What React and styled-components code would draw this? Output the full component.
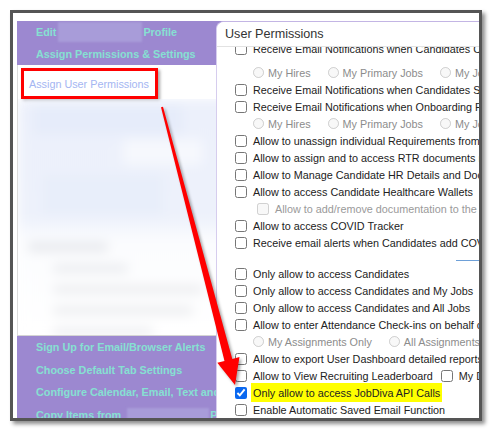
import React from 'react';
import styled, { createGlobalStyle } from 'styled-components';

const GlobalStyle = createGlobalStyle`
  html, body {
    margin: 0;
    padding: 0;
    background: #ffffff;
  }
  body {
    font-family: "Liberation Sans", Arial, sans-serif;
  }
`;

const Screen = styled.div`
  position: relative;
  width: 494px;
  height: 433px;
  padding: 10px 0 0 10px;
  box-sizing: border-box;
  overflow: hidden;
  background: #fff;
`;

const Frame = styled.div`
  position: relative;
  width: 472px;
  height: 411px;
  box-sizing: border-box;
  border: 3px solid #555555;
  box-shadow: 3px 3px 4px rgba(0, 0, 0, 0.45);
  background: #fff;
  overflow: hidden;
  padding: 8px 0 0 4px;
  display: flex;
`;

const Sidebar = styled.div`
  flex: 1;
  display: flex;
  flex-direction: column;
  min-width: 0;
`;

const PurpleBar = styled.div`
  flex: none;
  background: #9c88d0;
  display: flex;
  flex-direction: column;
  padding-left: 19px;
  ${(p) => p.$bottom && 'border-top: 1px solid #d4d4d4; height: 82px; overflow: hidden;'}
`;

const NavRow = styled.div`
  flex: none;
  display: flex;
  align-items: center;
  height: ${(p) => p.$h || 22}px;
  font-size: 10.8px;
  font-weight: bold;
  color: #86e0d2;
  white-space: nowrap;
`;

const NameBlur = styled.span`
  display: inline-block;
  width: ${(p) => p.$w}px;
  height: ${(p) => p.$ht || 20}px;
  margin: 0 1px 0 ${(p) => p.$gap || 2}px;
  background: #a89cd9;
  filter: blur(1px);
`;

const LinkArea = styled.div`
  flex: none;
  background: #fff;
  border-left: 1px solid #dcdcdc;
  padding: 3px 0 0 3px;
`;

const RedBox = styled.div`
  width: 137px;
  height: 31px;
  box-sizing: border-box;
  border: 3px solid #ff0000;
  box-shadow: 2px 2px 3px rgba(0, 0, 0, 0.35);
  display: flex;
  align-items: center;
  padding-left: 5px;
`;

const SideLink = styled.span`
  font-size: 10.8px;
  color: #a4b6f2;
  white-space: nowrap;
`;

const BlurArea = styled.div`
  flex: 1;
  border-left: 1px solid #dcdcdc;
  overflow: hidden;
`;

const BlurInner = styled.div`
  height: 100%;
  display: flex;
  flex-direction: column;
  padding: 6px 0 0 5px;
  box-sizing: border-box;
  background: linear-gradient(to bottom, #ecf0fb 0%, #edf1fb 50%, #fbfcfe 60%, #ffffff 100%);
  filter: blur(6px);
`;

const Smudge = styled.div`
  flex: none;
  width: ${(p) => p.$w}px;
  height: ${(p) => p.$h}px;
  margin-left: ${(p) => p.$x || 0}px;
  margin-top: ${(p) => p.$y || 0}px;
  background: ${(p) => p.$c};
  border-radius: 3px;
`;

const Dialog = styled.div`
  position: absolute;
  left: 203px;
  top: 8px;
  width: 420px;
  bottom: -40px;
  background: #fff;
  border-top: 1px solid #c3b5e4;
  border-left: 1px solid #d6cdee;
  border-top-left-radius: 8px;
  display: flex;
  flex-direction: column;
  overflow: hidden;
`;

const DialogHeader = styled.div`
  position: relative;
  z-index: 1;
  height: 24px;
  flex: none;
  display: flex;
  align-items: center;
  padding-left: 8px;
  background: #fff;
  border-bottom: 1px solid #e2e2e2;
  font-size: 12.6px;
  color: #333;
`;

const DialogBody = styled.div`
  display: flex;
  flex-direction: column;
  padding-left: 18px;
  font-size: 10.8px;
  color: #222;
`;

const Row = styled.div`
  flex: none;
  height: 17px;
  display: flex;
  align-items: center;
  white-space: nowrap;
  padding-left: ${(p) => p.$indent || 0}px;
  color: ${(p) => (p.$muted ? '#9a9a9a' : '#222')};
  ${(p) => p.$clip && 'overflow: hidden; & > * { position: relative; top: -7px; }'}
`;

const Check = styled.input.attrs({ type: 'checkbox' })`
  width: 12px;
  height: 12px;
  margin: 0 6px 0 0;
  flex: none;
  accent-color: #0a68f0;
`;

const Radio = styled.input.attrs({ type: 'radio' })`
  width: 11px;
  height: 11px;
  margin: 0 4px 0 0;
  flex: none;
`;

const RadioOption = styled.span`
  display: inline-flex;
  align-items: center;
  margin-right: 17px;
  color: #8c8c8c;
`;

const Label = styled.span`
  display: inline-flex;
  align-items: center;
  height: 19px;
  padding: 0 2px;
  margin-left: -2px;
  background: ${(p) => (p.$hl ? '#ffff00' : 'transparent')};
`;

const Extra = styled.span`
  display: inline-flex;
  align-items: center;
  margin-left: 6px;
`;

const Line = styled.span`
  display: inline-flex;
  align-items: center;
`;

const Separator = styled.div`
  flex: none;
  height: 14px;
  display: flex;
  align-items: flex-start;
  padding-left: 221px;
  &::after {
    content: '';
    display: block;
    width: 60px;
    height: 1px;
    margin-top: 9px;
    background: #6ea0d8;
  }
`;

const ArrowLayer = styled.svg`
  position: absolute;
  left: 0;
  top: 0;
  width: 494px;
  height: 433px;
  pointer-events: none;
  filter: drop-shadow(2px 2px 1.5px rgba(0, 0, 0, 0.35));
`;

const radiosA = ['My Hires', 'My Primary Jobs', 'My Jobs'];

const rows = [
  { text: 'Receive Email Notifications when Candidates Complete Onboarding', clip: true },
  { radios: radiosA },
  { text: 'Receive Email Notifications when Candidates Submit Timesheets' },
  { text: 'Receive Email Notifications when Onboarding Packages are Completed' },
  { radios: radiosA },
  { text: 'Allow to unassign individual Requirements from Onboarding' },
  { text: 'Allow to assign and to access RTR documents related to Candidates' },
  { text: 'Allow to Manage Candidate HR Details and Documents' },
  { text: 'Allow to access Candidate Healthcare Wallets' },
  { text: 'Allow to add/remove documentation to the Candidate Healthcare Wallets', sub: true },
  { text: 'Allow to access COVID Tracker' },
  { text: 'Receive email alerts when Candidates add COVID documents' },
  { sep: true },
  { text: 'Only allow to access Candidates' },
  { text: 'Only allow to access Candidates and My Jobs' },
  { text: 'Only allow to access Candidates and All Jobs' },
  { text: 'Allow to enter Attendance Check-ins on behalf of Candidates' },
  { radios: ['My Assignments Only', 'All Assignments'] },
  { text: 'Allow to export User Dashboard detailed reports' },
  { text: 'Allow to View Recruiting Leaderboard', extra: 'My Dashboard' },
  { text: 'Only allow to access JobDiva API Calls', checked: true, hl: true },
  { text: 'Enable Automatic Saved Email Function' },
];

const footerLinks = [
  'Sign Up for Email/Browser Alerts',
  'Choose Default Tab Settings',
  'Configure Calendar, Email, Text and Mobile Settings',
];

const PermissionRow = ({ row }) => {
  if (row.sep) return <Separator />;
  if (row.radios) {
    return (
      <Row $indent={18}>
        <Line>
          {row.radios.map((r) => (
            <RadioOption key={r}>
              <Radio disabled />
              {r}
            </RadioOption>
          ))}
        </Line>
      </Row>
    );
  }
  return (
    <Row $clip={row.clip} $indent={row.sub ? 22 : 0} $muted={row.sub}>
      <Line>
        <Check disabled={row.sub} defaultChecked={row.checked} />
        <Label $hl={row.hl}>{row.text}</Label>
        {row.extra && (
          <Extra>
            <Check />
            {row.extra}
          </Extra>
        )}
      </Line>
    </Row>
  );
};

const App = () => (
  <>
    <GlobalStyle />
    <Screen>
      <Frame>
        <Sidebar>
          <PurpleBar>
            <NavRow>
              Edit
              <NameBlur $w={84} />
              Profile
            </NavRow>
            <NavRow>Assign Permissions &amp; Settings</NavRow>
          </PurpleBar>
          <LinkArea>
            <RedBox>
              <SideLink>Assign User Permissions</SideLink>
            </RedBox>
          </LinkArea>
          <BlurArea>
            <BlurInner>
              <Smudge $w={150} $h={30} $x={10} $c="#e6ecfa" />
              <Smudge $w={80} $h={26} $x={100} $y={4} $c="#f6f8fd" />
              <Smudge $w={120} $h={40} $x={20} $y={10} $c="#e8eefa" />
              <Smudge $w={80} $h={8} $x={5} $y={28} $c="#e3e5ea" />
              <Smudge $w={75} $h={7} $x={30} $y={14} $c="#e6e8ec" />
              <Smudge $w={150} $h={7} $x={30} $y={14} $c="#e8e9ec" />
              <Smudge $w={140} $h={7} $x={30} $y={14} $c="#e8e9ec" />
              <Smudge $w={100} $h={7} $x={30} $y={14} $c="#e9eaee" />
            </BlurInner>
          </BlurArea>
          <PurpleBar $bottom>
            {footerLinks.map((l) => (
              <NavRow key={l} $h={22.5}>
                {l}
              </NavRow>
            ))}
            <NavRow $h={22.5}>
              Copy Items from
              <NameBlur $w={82} $ht={14} $gap={6} />
              Profile
            </NavRow>
          </PurpleBar>
        </Sidebar>
        <Dialog>
          <DialogHeader>User Permissions</DialogHeader>
          <DialogBody>
            {rows.map((row, i) => (
              <PermissionRow key={i} row={row} />
            ))}
          </DialogBody>
        </Dialog>
      </Frame>
      <ArrowLayer viewBox="0 0 494 433">
        <polygon
          fill="#ff0000"
          points="163,106.7 232.3,358.9 239.5,357 235,385 217.3,362.8 224.5,360.9 161,107.3"
        />
      </ArrowLayer>
    </Screen>
  </>
);

export default App;
